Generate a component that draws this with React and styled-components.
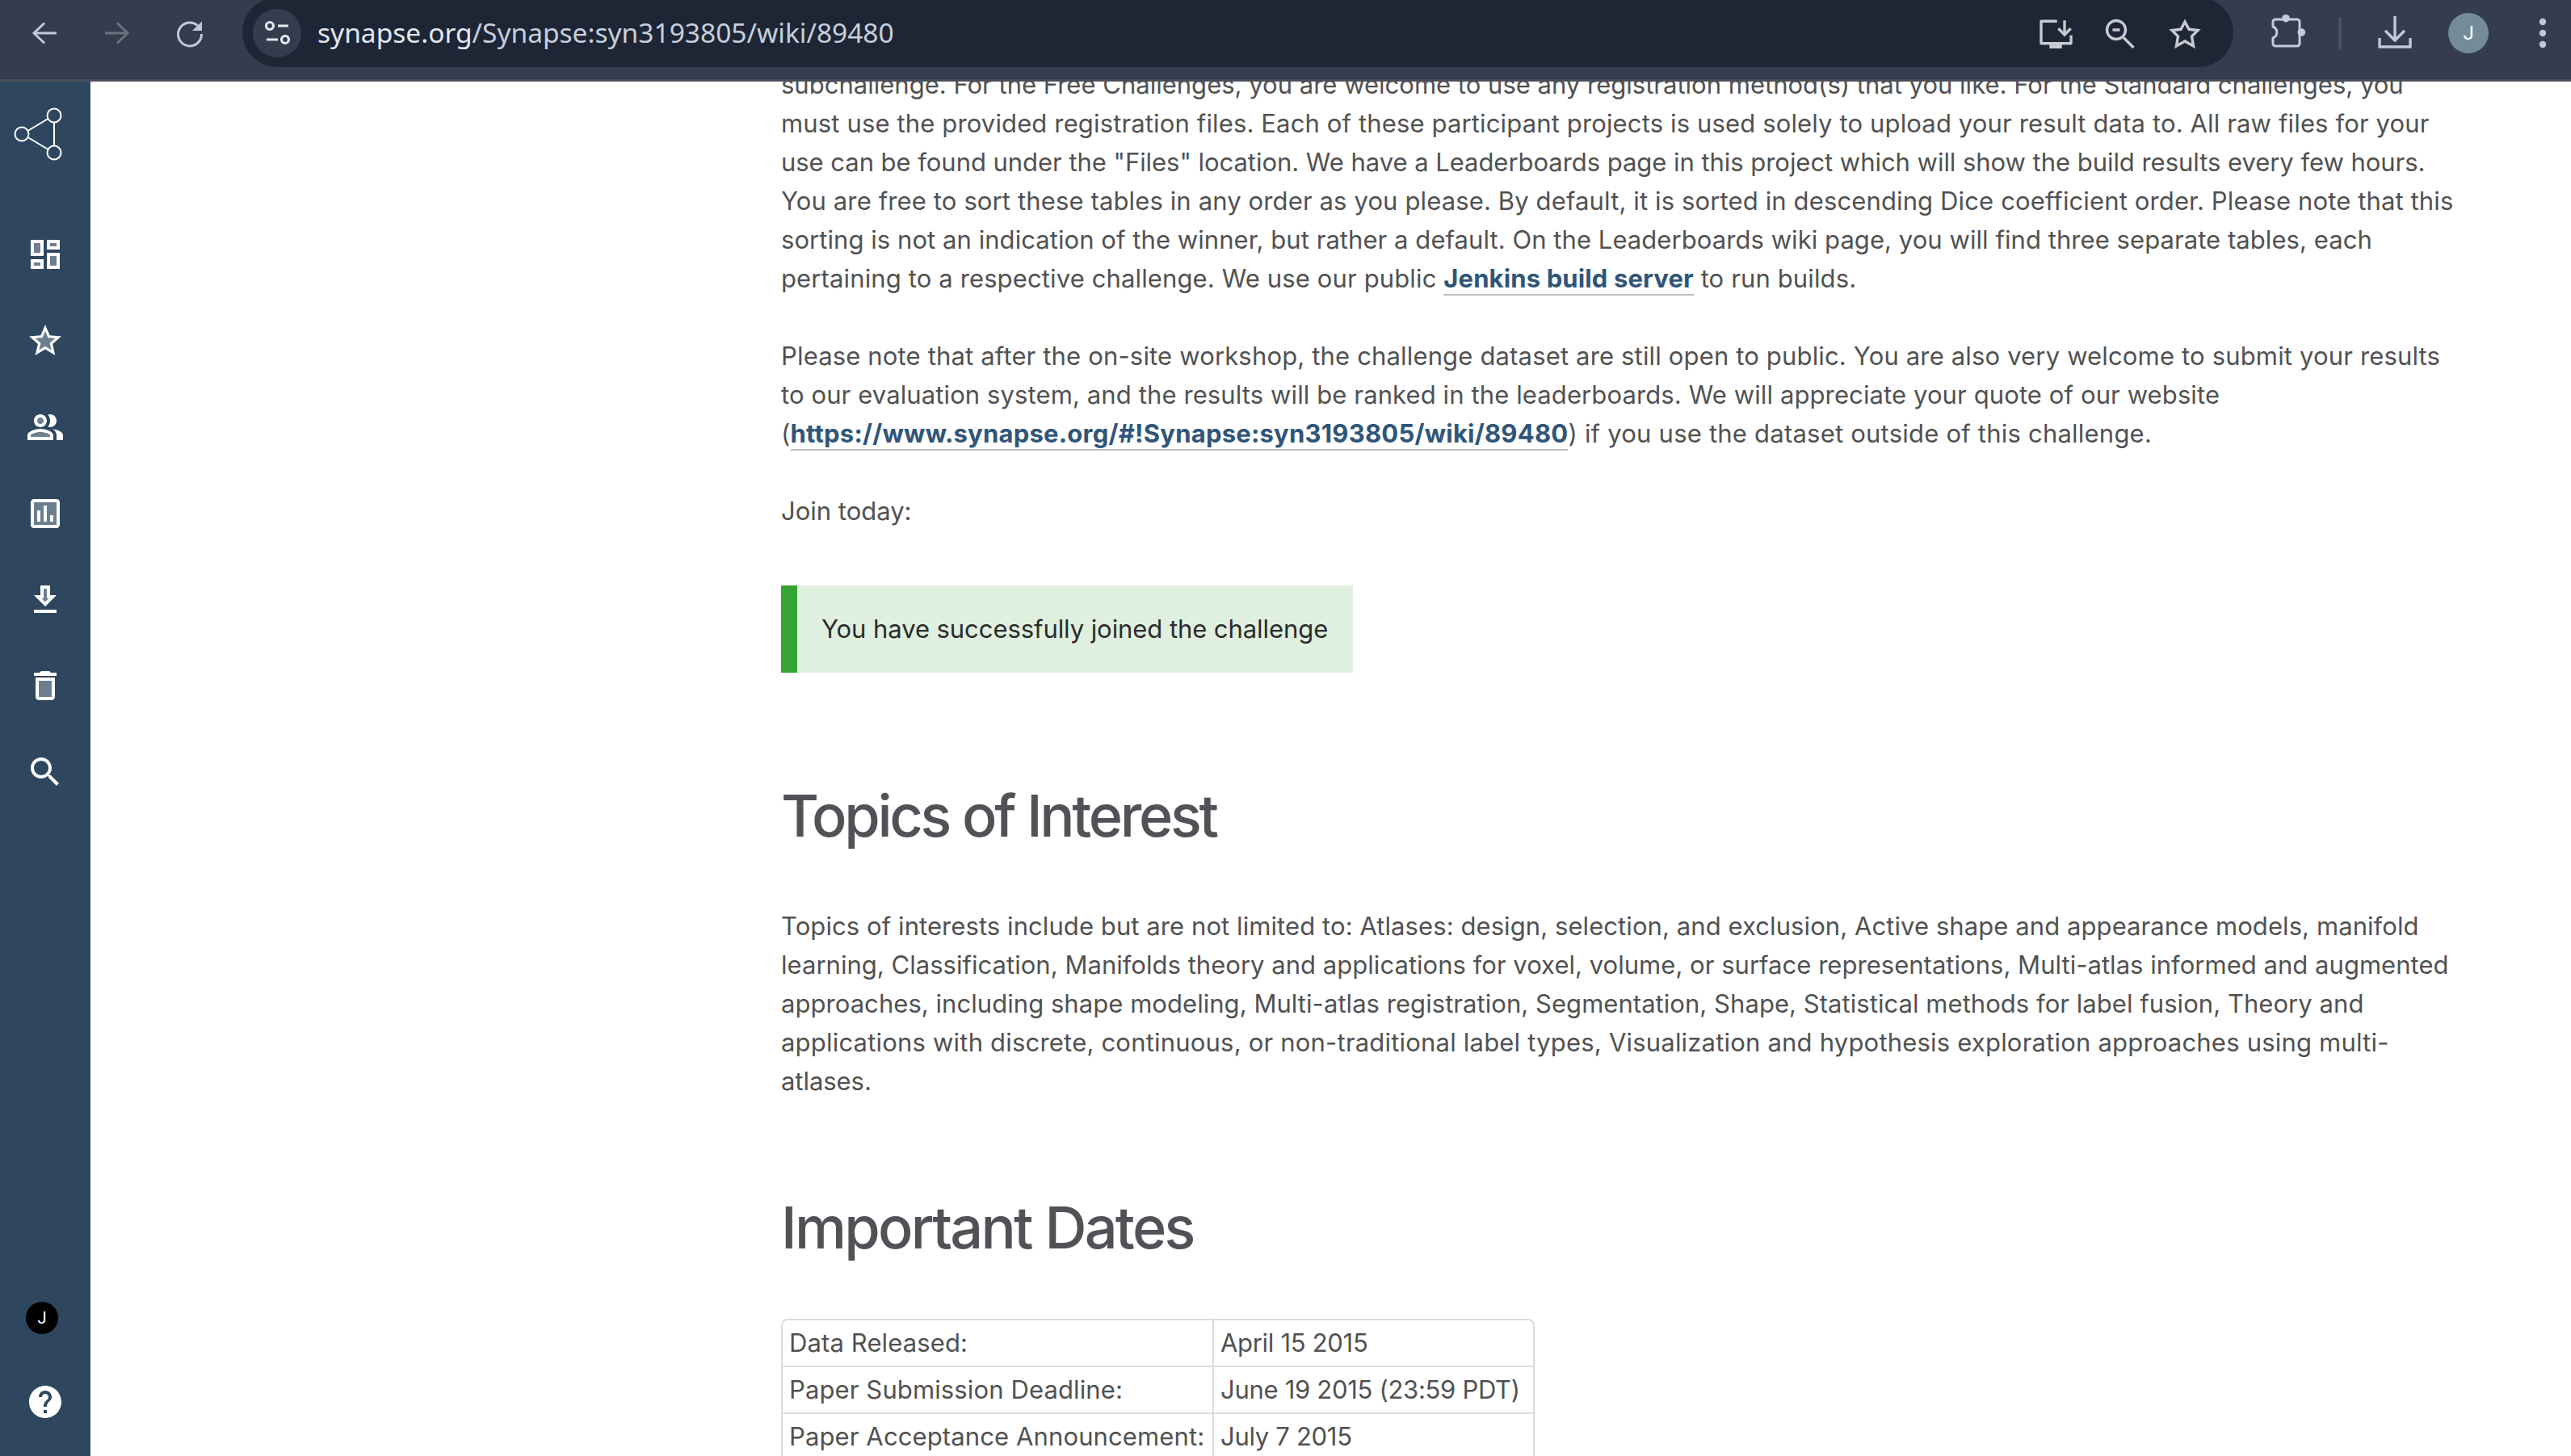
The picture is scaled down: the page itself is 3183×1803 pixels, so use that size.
import React from "react";
import styled, { createGlobalStyle } from "styled-components";

const GlobalStyle = createGlobalStyle`
  html, body {
    margin: 0;
    padding: 0;
    height: 100%;
    overflow: hidden;
    background: #fff;
  }
`;

const BODY_FONT = `Inter, "Noto Sans", sans-serif`;

const Page = styled.div`
  display: flex;
  flex-direction: column;
  width: 3183px;
  height: 1803px;
  overflow: hidden;
`;

const Toolbar = styled.header`
  display: flex;
  align-items: flex-start;
  flex: 0 0 101px;
  height: 101px;
  box-sizing: border-box;
  overflow: hidden;
  background: #343c4d;
  border-bottom: 3px solid #4a4e58;
`;

const NavGroup = styled.div`
  display: flex;
  flex: 0 0 300px;
  height: 81px;
  padding-left: 10px;
  box-sizing: border-box;
`;

const ToolButton = styled.div`
  display: flex;
  align-items: center;
  justify-content: center;
  flex: 0 0 ${(p) => p.$w || 90}px;
  height: 82px;
  color: ${(p) => p.$color || "#bdc9de"};
`;

const Omnibox = styled.div`
  display: flex;
  align-items: center;
  flex: 0 0 2465px;
  height: 86px;
  margin-top: -3px;
  padding-left: 13px;
  padding-right: 20px;
  box-sizing: border-box;
  background: #1e2636;
  border-radius: 43px;
`;

const TuneChip = styled.div`
  display: flex;
  align-items: center;
  justify-content: center;
  width: 60px;
  height: 60px;
  margin-top: 2px;
  border-radius: 50%;
  background: #343c4d;
  color: #e3e6ec;
`;

const Url = styled.div`
  flex: 1;
  margin-left: 20px;
  font-family: "Noto Sans", sans-serif;
  font-size: 33.5px;
  color: #c6cfdd;
  white-space: nowrap;
  b {
    font-weight: 400;
    color: #e3e8f0;
  }
`;

const OmniActions = styled.div`
  display: flex;
  margin-top: 6px;
`;

const RightTools = styled.div`
  display: flex;
  align-items: center;
  height: 82px;
  margin-left: 26px;
`;

const Divider = styled.div`
  width: 4px;
  height: 40px;
  margin: 0 34px 0 24px;
  border-radius: 2px;
  background: #4a5365;
`;

const ProfileChip = styled.div`
  display: flex;
  align-items: center;
  justify-content: center;
  width: 50px;
  height: 50px;
  margin: 0 43px 0 34px;
  border-radius: 50%;
  background: #748c99;
  color: #fff;
  font-family: "Roboto", sans-serif;
  font-size: 24px;
`;

const Body = styled.div`
  display: flex;
  flex: 1;
  min-height: 0;
`;

const Sidebar = styled.nav`
  display: flex;
  flex-direction: column;
  align-items: center;
  flex: 0 0 112px;
  padding-top: 28px;
  padding-bottom: 43px;
  box-sizing: border-box;
  background: #2e475f;
  color: #fff;
`;

const Logo = styled.svg`
  align-self: flex-start;
  width: 64px;
  height: 72px;
  margin-left: 16px;
  margin-bottom: 61px;
`;

const NavIcon = styled.div`
  display: flex;
  align-items: center;
  justify-content: center;
  flex: 0 0 106.8px;
  width: 100%;
`;

const SideBottom = styled.div`
  display: flex;
  flex-direction: column;
  align-items: center;
  margin-top: auto;
  gap: 60px;
`;

const Avatar = styled.div`
  display: flex;
  align-items: center;
  justify-content: center;
  width: 40px;
  height: 40px;
  margin-right: 8px;
  border-radius: 50%;
  background: #000;
  color: #fff;
  font-family: "Roboto", sans-serif;
  font-size: 20px;
`;

const Main = styled.main`
  flex: 1;
  min-width: 0;
  overflow: hidden;
  padding-left: 855px;
`;

const Scrolled = styled.div`
  margin-top: -20px;
  font-family: ${BODY_FONT};
  font-size: 31px;
  line-height: 48px;
  color: #515151;
`;

const Para = styled.p`
  margin: 0 0 48px;
`;

const Line = styled.span`
  display: block;
  white-space: nowrap;
  letter-spacing: ${(p) => p.$ls || 0}px;
`;

const TextLink = styled.a`
  padding-bottom: 1px;
  font-weight: 700;
  color: #2f5579;
  text-decoration: none;
  border-bottom: 2px solid #bdbdbd;
`;

const Callout = styled.div`
  width: fit-content;
  margin: 68px 0 129px;
  padding: 30px 31px 30px 30px;
  border-left: 20px solid #33a532;
  background: #e0f0df;
  color: #2b2b2b;
  letter-spacing: -0.07px;
  white-space: nowrap;
`;

const Heading = styled.h2`
  margin: 109px 0 65px;
  font-size: 72px;
  font-weight: 500;
  line-height: 96px;
  letter-spacing: ${(p) => p.$ls}px;
  color: #515257;
`;

const DatesTable = styled.table`
  border-collapse: separate;
  border-spacing: 0;
  width: 933px;
  border: 2px solid #dcdcdc;
  border-radius: 8px;
  td {
    height: 56px;
    padding: 0 0 0 8px;
    border-bottom: 2px solid #dcdcdc;
    white-space: nowrap;
    letter-spacing: -0.3px;
  }
  td:first-child {
    width: 524px;
    border-right: 2px solid #dcdcdc;
    letter-spacing: 0.12px;
  }
`;

const Tone = (props) => <path opacity=".3" {...props} />;

const Icon = ({ size = 48, children }) => (
  <svg width={size} height={size} viewBox="0 0 24 24" fill="currentColor">
    {children}
  </svg>
);

const Stroke = ({ size = 48, width = 3.4, children }) => (
  <svg width={size} height={size} viewBox={`0 0 ${size} ${size}`} fill="none" stroke="currentColor" strokeWidth={width}>
    {children}
  </svg>
);

const navIcons = [
  <>
    <Tone d="M5 5h4v6H5zm10 8h4v6h-4zM5 17h4v2H5zM15 5h4v2h-4z" />
    <path d="M3 13h8V3H3v10zm2-8h4v6H5V5zm8 16h8V11h-8v10zm2-8h4v6h-4v-6zM13 3v6h8V3h-8zm6 4h-4V5h4v2zM3 21h8v-6H3v6zm2-4h4v2H5v-2z" />
  </>,
  <>
    <Tone d="M12 15.4l-3.76 2.27 1-4.28-3.32-2.88 4.38-.38L12 6.1l1.71 4.04 4.38.38-3.32 2.88 1 4.28z" />
    <path d="M22 9.24l-7.19-.62L12 2 9.19 8.63 2 9.24l5.46 4.73L5.82 21 12 17.27 18.18 21l-1.63-7.03L22 9.24zM12 15.4l-3.76 2.27 1-4.28-3.32-2.88 4.38-.38L12 6.1l1.71 4.04 4.38.38-3.32 2.88 1 4.28z" />
  </>,
  <>
    <Tone d="M9 10a2 2 0 100-4 2 2 0 000 4zM9 15c-2.7 0-5.8 1.29-6 2.01V18h12v-1c-.2-.71-3.3-2-6-2z" />
    <path d="M16.67 13.13C18.04 14.06 19 15.32 19 17v3h4v-3c0-2.18-3.57-3.47-6.33-3.87zM15 12c2.21 0 4-1.79 4-4s-1.79-4-4-4c-.47 0-.91.1-1.33.24C14.5 5.27 15 6.58 15 8s-.5 2.73-1.33 3.76c.42.14.86.24 1.33.24zM9 12c2.21 0 4-1.79 4-4s-1.79-4-4-4-4 1.79-4 4 1.79 4 4 4zm0-6c1.1 0 2 .9 2 2s-.9 2-2 2-2-.9-2-2 .9-2 2-2zM9 13c-2.67 0-8 1.34-8 4v3h16v-3c0-2.66-5.33-4-8-4zm6 5H3v-.99C3.2 16.29 6.3 15 9 15s5.8 1.29 6 2v1z" />
  </>,
  <>
    <Tone d="M5 5v14h14V5H5zm4 12H7v-7h2v7zm4 0h-2V7h2v10zm4 0h-2v-4h2v4z" />
    <path d="M3 5v14c0 1.1.9 2 2 2h14c1.1 0 2-.9 2-2V5c0-1.1-.9-2-2-2H5c-1.1 0-2 .9-2 2zm2 0h14v14H5V5zm2 5h2v7H7zm4-3h2v10h-2zm4 6h2v4h-2z" />
  </>,
  <>
    <Tone d="M14 5h-4v6H9.83L12 13.17 14.17 11H14z" />
    <path d="M19 9h-4V3H9v6H5l7 7 7-7zm-8 2V5h2v6h1.17L12 13.17 9.83 11H11zm-6 7h14v2H5z" />
  </>,
  <>
    <Tone d="M8 9h8v10H8z" />
    <path d="M15.5 4l-1-1h-5l-1 1H5v2h14V4zM6 19c0 1.1.9 2 2 2h8c1.1 0 2-.9 2-2V7H6v12zM8 9h8v10H8V9z" />
  </>,
  <path d="M15.5 14h-.79l-.28-.27C15.41 12.59 16 11.11 16 9.5 16 5.91 13.09 3 9.5 3S3 5.91 3 9.5 5.91 16 9.5 16c1.61 0 3.09-.59 4.23-1.57l.27.28v.79l5 4.99L20.49 19l-4.99-5zm-6 0C7.01 14 5 11.99 5 9.5S7.01 5 9.5 5 14 7.01 14 9.5 11.99 14 9.5 14z" />,
];

// text + letter spacing, so each line ends where it does in the wiki page
const Para1 = [
  ["subchallenge. For the Free Challenges, you are welcome to use any registration method(s) that you like. For the Standard challenges, you", 0.01],
  ["must use the provided registration files. Each of these participant projects is used solely to upload your result data to. All raw files for your", 0.14],
  ['use can be found under the "Files" location. We have a Leaderboards page in this project which will show the build results every few hours.', -0.04],
  ["You are free to sort these tables in any order as you please. By default, it is sorted in descending Dice coefficient order. Please note that this", 0.13],
  ["sorting is not an indication of the winner, but rather a default. On the Leaderboards wiki page, you will find three separate tables, each", 0.06],
];

const Topics = [
  ["Topics of interests include but are not limited to: Atlases: design, selection, and exclusion, Active shape and appearance models, manifold", 0.08],
  ["learning, Classification, Manifolds theory and applications for voxel, volume, or surface representations, Multi-atlas informed and augmented", 0.03],
  ["approaches, including shape modeling, Multi-atlas registration, Segmentation, Shape, Statistical methods for label fusion, Theory and", 0.05],
  ["applications with discrete, continuous, or non-traditional label types, Visualization and hypothesis exploration approaches using multi-", 0.2],
  ["atlases.", -0.05],
];

const dates = [
  ["Data Released:", "April 15 2015"],
  ["Paper Submission Deadline:", "June 19 2015 (23:59 PDT)"],
  ["Paper Acceptance Announcement:", "July 7 2015"],
];

function App() {
  return (
    <Page>
      <GlobalStyle />
      <Toolbar>
        <NavGroup>
          <ToolButton>
            <Stroke size={40} width={3}>
              <path d="M35 20H7M20 7.500L7 20l13 12.500" />
            </Stroke>
          </ToolButton>
          <ToolButton $color="#6c7280">
            <Stroke size={40} width={3}>
              <path d="M5 20h28M20 7.500L33 20 20 32.500" />
            </Stroke>
          </ToolButton>
          <ToolButton>
            <Stroke size={40} width={3}>
              <path d="M29.500 10.500A14.500 14.500 0 1 0 34.500 21" />
              <path d="M23 17h12V5.500z" fill="currentColor" stroke="none" />
            </Stroke>
          </ToolButton>
        </NavGroup>
        <Omnibox>
          <TuneChip>
            <Stroke size={40} width={3.2}>
              <circle cx="11" cy="11" r="4.500" />
              <path d="M21 11h13M7 28h14" />
              <circle cx="30" cy="28" r="4.500" />
            </Stroke>
          </TuneChip>
          <Url>
            <b>synapse.org</b>/Synapse:syn3193805/wiki/89480
          </Url>
          <OmniActions>
            <ToolButton $w={80} $color="#c8cad0">
              <Stroke>
                <path d="M25.700 7.300H6v27.400h37v-10" strokeLinejoin="round" />
                <path d="M35 6.300V23.500M27.300 16.300L35 24l7.700-7.700" />
                <path d="M16.300 35h15.400v6H16.300z" fill="currentColor" stroke="none" />
              </Stroke>
            </ToolButton>
            <ToolButton $w={80} $color="#c8cad0">
              <Stroke>
                <circle cx="19" cy="18" r="11.500" />
                <path d="M28 27.500l12.500 12.500M14.500 18h9" />
              </Stroke>
            </ToolButton>
            <ToolButton $w={80} $color="#c8cad0">
              <Stroke>
                <path d="M24 8l5 9.300 11 1.200-7.500 7.500 2 12-10.500-6-10.500 6 2-12L8 18.500l11-1.200z" />
              </Stroke>
            </ToolButton>
          </OmniActions>
        </Omnibox>
        <RightTools>
          <ToolButton $w={80} $color="#bfcce3">
            <Stroke width={3}>
              <path d="M10 7h27a3 3 0 013 3v27a3 3 0 01-3 3H10a3 3 0 01-3-3v-7A7.500 7.500 0 007 16v-6a3 3 0 013-3z" strokeLinejoin="round" />
              <circle cx="23" cy="5.700" r="4.800" fill="currentColor" stroke="none" />
              <circle cx="42.300" cy="23" r="4.800" fill="currentColor" stroke="none" />
            </Stroke>
          </ToolButton>
          <Divider />
          <ToolButton $w={64}>
            <Stroke width={3.4}>
              <path d="M24 3v29M12 21l12 12 12-12M5 30v11h38V30" />
            </Stroke>
          </ToolButton>
          <ProfileChip>J</ProfileChip>
          <ToolButton $w={44}>
            <Stroke width={0}>
              <circle cx="24" cy="10" r="4.200" fill="currentColor" />
              <circle cx="24" cy="24" r="4.200" fill="currentColor" />
              <circle cx="24" cy="38" r="4.200" fill="currentColor" />
            </Stroke>
          </ToolButton>
        </RightTools>
      </Toolbar>
      <Body>
        <Sidebar>
          <Logo viewBox="0 0 64 72" fill="none" stroke="#fff" strokeWidth="2">
            <circle cx="51" cy="14" r="8.500" />
            <circle cx="11" cy="37" r="8.500" />
            <circle cx="51" cy="60" r="8.500" />
            <path d="M51 22.500v29M18.500 33l25-15M18.500 41l25 15" />
          </Logo>
          {navIcons.map((icon, i) => (
            <NavIcon key={i}>
              <Icon>{icon}</Icon>
            </NavIcon>
          ))}
          <SideBottom>
            <Avatar>J</Avatar>
            <Icon>
              <path d="M12 2C6.480 2 2 6.480 2 12s4.480 10 10 10 10-4.480 10-10S17.520 2 12 2zm1 17h-2v-2h2v2zm2.070-7.750l-.9.920C13.450 12.900 13 13.500 13 15h-2v-.5c0-1.100.45-2.100 1.170-2.830l1.240-1.260c.37-.36.590-.86.590-1.410 0-1.100-.9-2-2-2s-2 .9-2 2H8c0-2.210 1.790-4 4-4s4 1.790 4 4c0 .88-.36 1.680-.93 2.250z" />
            </Icon>
          </SideBottom>
        </Sidebar>
        <Main>
          <Scrolled>
            <Para>
              {Para1.map(([text, ls]) => (
                <Line key={text} $ls={ls}>{text}</Line>
              ))}
              <Line $ls={0.13}>
                pertaining to a respective challenge. We use our public{" "}
                <TextLink>Jenkins build server</TextLink> to run builds.
              </Line>
            </Para>
            <Para>
              <Line $ls={0.16}>
                Please note that after the on-site workshop, the challenge dataset are still open to public. You are also very welcome to submit your results
              </Line>
              <Line $ls={0.11}>
                to our evaluation system, and the results will be ranked in the leaderboards. We will appreciate your quote of our website
              </Line>
              <Line $ls={0.22}>
                (<TextLink>https://www.synapse.org/#!Synapse:syn3193805/wiki/89480</TextLink>) if you use the dataset outside of this challenge.
              </Line>
            </Para>
            <Para>Join today:</Para>
            <Callout>You have successfully joined the challenge</Callout>
            <Heading $ls={-3.3}>Topics of Interest</Heading>
            <Para>
              {Topics.map(([text, ls]) => (
                <Line key={text} $ls={ls}>{text}</Line>
              ))}
            </Para>
            <Heading $ls={-2.7}>Important Dates</Heading>
            <DatesTable>
              <tbody>
                {dates.map(([a, b]) => (
                  <tr key={a}>
                    <td>{a}</td>
                    <td>{b}</td>
                  </tr>
                ))}
              </tbody>
            </DatesTable>
          </Scrolled>
        </Main>
      </Body>
    </Page>
  );
}

export default App;
